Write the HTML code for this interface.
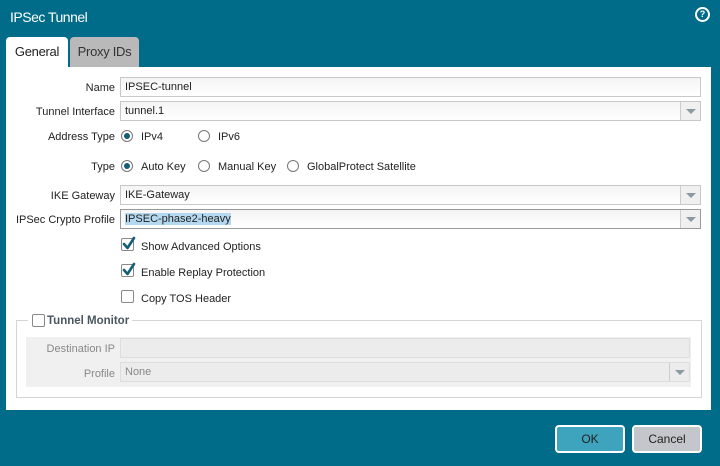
<!DOCTYPE html>
<html><head><style>
*{box-sizing:border-box;margin:0;padding:0}
body{width:720px;height:466px;background:#006c8a;font-family:"Liberation Sans",sans-serif;font-size:11px;color:#222;position:relative;overflow:hidden}
.a{position:absolute}
.title{left:10px;top:9px;color:#fff;font-size:14px;letter-spacing:-0.5px}
.help{left:695px;top:7px;width:15px;height:15px;border:2px solid #fff;border-radius:50%;color:#fff;font-size:9px;font-weight:bold;text-align:center;line-height:11px}
.tab{top:37px;height:31px;border-radius:4px 4px 0 0;font-size:13px;text-align:center;line-height:30px;letter-spacing:-0.3px}
.panel{left:6px;top:67px;width:705px;height:343px;background:#fff}
.lbl{text-align:right;width:110px;left:5px}
.inp{left:120px;width:581px;height:20px;border:1px solid #c8c8c8;background:linear-gradient(#f4f4f4,#fff);padding-left:4px;line-height:19px}
.arr{position:absolute;right:0;top:0;width:20px;height:18px;border-left:1px solid #ccc;background:#f0f0f0}
.arr:after{content:"";position:absolute;left:5px;top:7px;border:5px solid transparent;border-top:5px solid #8a9aa3;border-bottom:0}
.rad{width:12px;height:12px;border:1px solid #777;border-radius:50%;background:#fff}
.rad.on:after{content:"";position:absolute;left:2px;top:2px;width:6px;height:6px;border-radius:50%;background:#135f78}
.cb{width:13px;height:13px;border:1px solid #888;border-radius:2px;background:#fff}
.btn{top:425px;width:70px;height:28px;border:2px solid #fff;border-radius:4px;text-align:center;line-height:24px;font-size:12px}
</style></head><body>
<div class="a title">IPSec Tunnel</div>
<div class="a help">?</div>
<div class="a tab" style="left:6px;width:62px;background:#fff">General</div>
<div class="a tab" style="left:70px;width:69px;background:#b9b9b9;color:#333">Proxy IDs</div>
<div class="a panel"></div>

<div class="a lbl" style="top:82px">Name</div>
<div class="a inp" style="top:77px">IPSEC-tunnel</div>
<div class="a lbl" style="top:106px">Tunnel Interface</div>
<div class="a inp" style="top:101px">tunnel.1<div class="arr"></div></div>

<div class="a lbl" style="top:131px">Address Type</div>
<div class="a rad on" style="left:121px;top:130px"></div><div class="a" style="left:141px;top:131px">IPv4</div>
<div class="a rad" style="left:198px;top:130px"></div><div class="a" style="left:218px;top:131px">IPv6</div>

<div class="a lbl" style="top:161px">Type</div>
<div class="a rad on" style="left:121px;top:160px"></div><div class="a" style="left:141px;top:161px">Auto Key</div>
<div class="a rad" style="left:198px;top:160px"></div><div class="a" style="left:218px;top:161px">Manual Key</div>
<div class="a rad" style="left:287px;top:160px"></div><div class="a" style="left:307px;top:161px">GlobalProtect Satellite</div>

<div class="a lbl" style="top:190px">IKE Gateway</div>
<div class="a inp" style="top:185px">IKE-Gateway<div class="arr"></div></div>
<div class="a lbl" style="top:214px">IPSec Crypto Profile</div>
<div class="a inp" style="top:209px;border-color:#999"><span style="background:#b4d8f0">IPSEC-phase2-heavy</span><div class="arr"></div></div>

<div class="a cb" style="left:121px;top:238px"></div>
<svg class="a" style="left:121px;top:236px" width="16" height="16"><path d="M3 8 L6.5 12 L13 2" fill="none" stroke="#135f78" stroke-width="2.6" stroke-linecap="round" stroke-linejoin="round"/></svg>
<div class="a" style="left:141px;top:241px">Show Advanced Options</div>
<div class="a cb" style="left:121px;top:264px"></div>
<svg class="a" style="left:121px;top:262px" width="16" height="16"><path d="M3 8 L6.5 12 L13 2" fill="none" stroke="#135f78" stroke-width="2.6" stroke-linecap="round" stroke-linejoin="round"/></svg>
<div class="a" style="left:141px;top:267px">Enable Replay Protection</div>
<div class="a cb" style="left:121px;top:290px"></div>
<div class="a" style="left:141px;top:293px">Copy TOS Header</div>

<div class="a" style="left:16px;top:320px;width:686px;height:78px;border:1px solid #d5d5d5"></div>
<div class="a" style="left:28px;top:312px;width:104px;height:16px;background:#fff"></div>
<div class="a cb" style="left:32px;top:314px"></div>
<div class="a" style="left:47px;top:315px;font-weight:bold;color:#4a5660;font-size:11.5px">Tunnel Monitor</div>
<div class="a" style="left:26px;top:337px;width:665px;height:50px;background:#f0f0f0"></div>
<div class="a lbl" style="top:343px;color:#888">Destination IP</div>
<div class="a inp" style="top:338px;width:570px;background:#ececec;border-color:#ddd"></div>
<div class="a lbl" style="top:368px;color:#888">Profile</div>
<div class="a inp" style="top:362px;width:570px;background:#ececec;border-color:#ddd;color:#888">None<div class="arr" style="background:#ececec"></div></div>

<div class="a btn" style="left:555px;background:#3ea3bd">OK</div>
<div class="a btn" style="left:632px;background:#c3c6ca">Cancel</div>
</body></html>
